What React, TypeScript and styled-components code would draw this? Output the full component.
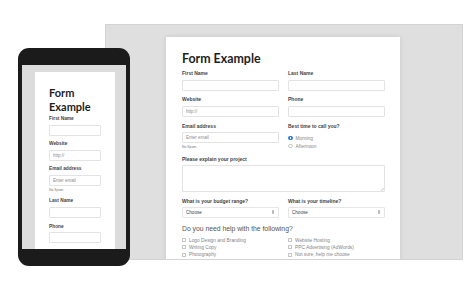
import React from "react";
import styled, { createGlobalStyle } from "styled-components";

const Global = createGlobalStyle`
  html, body { margin: 0; padding: 0; background: #fff; }
  body { font-family: "Liberation Sans", Arial, sans-serif; }
  * { box-sizing: border-box; }
`;

const Stage = styled.div`
  position: relative;
  width: 474px;
  height: 296px;
  overflow: hidden;
  background: #fff;
  padding: 24px 0 0 105px;
`;

const Desktop = styled.div`
  width: 358px;
  height: 236px;
  background: #dfdfdf;
  border: 1px solid #d3d3d3;
  padding: 12px 0 0 60px;
  overflow: hidden;
`;

const Card = styled.div<{ $w: number; $pt: number; $pl: number; $pr: number }>`
  width: ${(p) => p.$w}px;
  min-height: 260px;
  background: #fff;
  padding: ${(p) => p.$pt}px ${(p) => p.$pr}px 0 ${(p) => p.$pl}px;
  box-shadow: 0 0 5px rgba(0, 0, 0, 0.1);
  display: flex;
  flex-direction: column;
`;

const Title = styled.h1<{ $size: number }>`
  margin: 0;
  font-family: Lato, "Liberation Sans", sans-serif;
  font-weight: 700;
  color: #1e1e1e;
  font-size: ${(p) => p.$size}px;
  line-height: 14px;
`;

const Row = styled.div<{ $mt: number }>`
  display: grid;
  grid-template-columns: 97px 97px;
  column-gap: 9px;
  margin-top: ${(p) => p.$mt}px;
`;

const Field = styled.div<{ $mt?: number; $gap?: number }>`
  display: flex;
  flex-direction: column;
  gap: ${(p) => p.$gap ?? 4}px;
  margin-top: ${(p) => p.$mt ?? 0}px;
`;

const Label = styled.div<{ $size?: number }>`
  font-weight: 700;
  font-size: ${(p) => p.$size ?? 5}px;
  line-height: 6px;
  color: #444;
  white-space: nowrap;
`;

const Input = styled.input<{ $w?: number }>`
  display: block;
  width: ${(p) => (p.$w ? `${p.$w}px` : "100%")};
  height: 11px;
  margin: 0;
  padding: 0 0 0 3px;
  border: 1px solid #e3e3e3;
  border-radius: 1px;
  background: #fff;
  font-family: "Liberation Sans", Arial, sans-serif;
  font-size: 4.5px;
  outline: none;
  &::placeholder { color: #8c8c8c; }
`;

const Help = styled.div`
  margin-top: 2px;
  font-size: 3.4px;
  line-height: 4px;
  color: #777;
`;

const RadioGroup = styled.div`
  display: flex;
  flex-direction: column;
  gap: 2px;
  margin-top: 6px;
`;

const OptionRow = styled.div<{ $h?: number }>`
  display: flex;
  align-items: center;
  height: ${(p) => p.$h ?? 6}px;
  gap: 3px;
  font-size: 4.8px;
  color: #858585;
  white-space: nowrap;
`;

const RadioDot = styled.span<{ $on?: boolean }>`
  width: 4.6px;
  height: 4.6px;
  border-radius: 50%;
  flex: none;
  background: ${(p) => (p.$on ? "#2b78e4" : "#fff")};
  border: ${(p) => (p.$on ? "none" : "0.6px solid #c9c9c9")};
  box-shadow: ${(p) => (p.$on ? "inset 0 0 0 1.5px #2b78e4, inset 0 0 0 4px #fff" : "none")};
  ${(p) =>
    p.$on &&
    `background: radial-gradient(circle, #fff 0 0.8px, #2b78e4 1.1px);
     box-shadow: none;`}
`;

const Box = styled.span`
  width: 4px;
  height: 4px;
  flex: none;
  border: 0.6px solid #c6c6c6;
  border-radius: 0.6px;
  background: #fff;
`;

const TextArea = styled.div`
  position: relative;
  height: 27px;
  border: 1px solid #e3e3e3;
  border-radius: 1px;
  background: #fff;
`;

const Grip = styled.svg`
  position: absolute;
  right: 0;
  bottom: 0;
`;

const Select = styled.div`
  display: flex;
  align-items: center;
  justify-content: space-between;
  height: 11px;
  padding: 0 4px 0 3px;
  border: 1px solid #e6e6e6;
  border-radius: 1px;
  background: #fff;
  font-size: 4.6px;
  color: #444;
`;

const Heading = styled.div`
  margin-top: 7px;
  font-family: "Liberation Sans", Arial, sans-serif;
  font-size: 6.8px;
  line-height: 8px;
  color: #555;
  white-space: nowrap;
`;

const CheckGrid = styled.div`
  display: grid;
  grid-template-columns: 106px 97px;
  margin-top: 4px;
`;

const CheckCol = styled.div`
  display: flex;
  flex-direction: column;
`;

const Phone = styled.div`
  position: absolute;
  left: 18px;
  top: 48px;
  width: 112px;
  height: 218px;
  background: #1b1b1b;
  border-radius: 11px;
  padding: 17px 4px;
`;

const Screen = styled.div`
  height: 184px;
  background: #dcdcdc;
  overflow: hidden;
  padding: 7px 11px 0 13px;
`;

const PhoneCard = styled.div`
  height: 100%;
  background: #fff;
  padding: 14px 0 0 14px;
  display: flex;
  flex-direction: column;
`;

const Arrows = () => (
  <svg width="2" height="4" viewBox="0 0 2 4">
    <path d="M1 0 L2 1.6 L0 1.6 Z M1 4 L2 2.4 L0 2.4 Z" fill="#555" />
  </svg>
);

const Check = ({ children }: { children: React.ReactNode }) => (
  <OptionRow $h={7.3}>
    <Box />
    {children}
  </OptionRow>
);

export default function App() {
  return (
    <>
      <Global />
      <Stage>
        <Desktop>
          <Card $w={234} $pt={15} $pl={16} $pr={15}>
            <Title $size={12.4}>Form Example</Title>
            <Row $mt={4}>
              <Field>
                <Label>First Name</Label>
                <Input />
              </Field>
              <Field>
                <Label>Last Name</Label>
                <Input />
              </Field>
            </Row>
            <Row $mt={5}>
              <Field>
                <Label>Website</Label>
                <Input placeholder="http://" />
              </Field>
              <Field>
                <Label>Phone</Label>
                <Input />
              </Field>
            </Row>
            <Row $mt={6}>
              <Field $gap={3}>
                <Label>Email address</Label>
                <div>
                  <Input placeholder="Enter email" />
                  <Help>No Spam.</Help>
                </div>
              </Field>
              <Field $gap={0}>
                <Label>Best time to call you?</Label>
                <RadioGroup>
                  <OptionRow>
                    <RadioDot $on />
                    Morning
                  </OptionRow>
                  <OptionRow>
                    <RadioDot />
                    Afternoon
                  </OptionRow>
                </RadioGroup>
              </Field>
            </Row>
            <Field $mt={7} $gap={2.5}>
              <Label>Please explain your project</Label>
              <TextArea>
                <Grip width="4" height="4" viewBox="0 0 4 4">
                  <path d="M1 3.6 L3.6 1 M2.4 3.6 L3.6 2.4" stroke="#999" strokeWidth="0.5" />
                </Grip>
              </TextArea>
            </Field>
            <Row $mt={6}>
              <Field $gap={3}>
                <Label>What is your budget range?</Label>
                <Select>
                  Choose
                  <Arrows />
                </Select>
              </Field>
              <Field $gap={3}>
                <Label>What is your timeline?</Label>
                <Select>
                  Choose
                  <Arrows />
                </Select>
              </Field>
            </Row>
            <Heading>Do you need help with the following?</Heading>
            <CheckGrid>
              <CheckCol>
                <Check>Logo Design and Branding</Check>
                <Check>Writing Copy</Check>
                <Check>Photography</Check>
              </CheckCol>
              <CheckCol>
                <Check>Website Hosting</Check>
                <Check>PPC Advertising (AdWords)</Check>
                <Check>Not sure, help me choose</Check>
              </CheckCol>
            </CheckGrid>
          </Card>
        </Desktop>

        <Phone>
          <Screen>
            <PhoneCard>
              <Title $size={11}>
                Form
                <br />
                Example
              </Title>
              <Field $mt={2} $gap={3}>
                <Label $size={4.8}>First Name</Label>
                <Input $w={52} />
              </Field>
              <Field $mt={5} $gap={3}>
                <Label $size={4.8}>Website</Label>
                <Input $w={52} placeholder="http://" />
              </Field>
              <Field $mt={5} $gap={3}>
                <Label $size={4.8}>Email address</Label>
                <div>
                  <Input $w={52} placeholder="Enter email" />
                  <Help>No Spam.</Help>
                </div>
              </Field>
              <Field $mt={6} $gap={2.5}>
                <Label $size={4.8}>Last Name</Label>
                <Input $w={52} />
              </Field>
              <Field $mt={6} $gap={2.5}>
                <Label $size={4.8}>Phone</Label>
                <Input $w={52} />
              </Field>
            </PhoneCard>
          </Screen>
        </Phone>
      </Stage>
    </>
  );
}
